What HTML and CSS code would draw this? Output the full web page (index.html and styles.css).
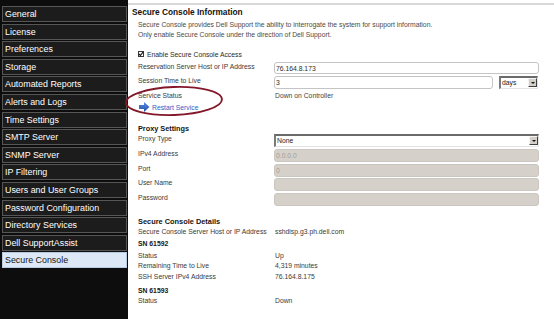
FILE: index.html
```html
<!DOCTYPE html>
<html>
    <head>
        <meta charset="utf-8" />
        <title>Secure Console</title>
        <link rel="stylesheet" href="styles.css">
    </head>
    <body>
        <div class="page">
            <ul class="nav">
                <li>General</li>
                <li>License</li>
                <li>Preferences</li>
                <li>Storage</li>
                <li>Automated Reports</li>
                <li>Alerts and Logs</li>
                <li>Time Settings</li>
                <li>SMTP Server</li>
                <li>SNMP Server</li>
                <li>IP Filtering</li>
                <li>Users and User Groups</li>
                <li>Password Configuration</li>
                <li>Directory Services</li>
                <li>Dell SupportAssist</li>
                <li class="current">Secure Console</li>
            </ul>

            <div class="main">
                <h1>Secure Console Information</h1>
                <div class="section">
                    <p class="desc">Secure Console provides Dell Support the ability to interrogate the system for support information.<br>Only enable Secure Console under the direction of Dell Support.</p>

                    <div class="check">
                        <span class="box"><svg width="6" height="6" viewBox="0 0 6 6"><path d="M1 3 L2.4 4.5 L5 1.2" fill="none" stroke="#111" stroke-width="1.1"/></svg></span>
                        Enable Secure Console Access
                    </div>

                    <div class="form top">
                        <span class="label">Reservation Server Host or IP Address</span>
                        <input class="text" type="text" value="76.164.8.173">

                        <span class="label">Session Time to Live</span>
                        <div class="ttl">
                            <input class="text" type="text" value="3">
                            <div class="select days"><span>days</span><i class="btn"></i></div>
                        </div>

                        <span class="label status">Service Status</span>
                        <span class="value status">Down on Controller</span>
                    </div>

                    <a class="restart" href="#">
                        <svg width="11" height="10" viewBox="0 0 11 10">
                            <defs>
                                <linearGradient id="arw" x1="0" y1="0" x2="0" y2="1">
                                    <stop offset="0" stop-color="#5b8de0"/>
                                    <stop offset="1" stop-color="#1f4fb0"/>
                                </linearGradient>
                            </defs>
                            <path d="M0 3 H5 V0 L10.5 5 L5 10 V7 H0 Z" fill="url(#arw)"/>
                        </svg>
                        Restart Service
                    </a>

                    <h2>Proxy Settings</h2>
                    <div class="form proxy">
                        <span class="label">Proxy Type</span>
                        <div class="select"><span>None</span><i class="btn"></i></div>

                        <span class="label">IPv4 Address</span>
                        <input class="text" type="text" value="0.0.0.0" disabled>

                        <span class="label">Port</span>
                        <input class="text" type="text" value="0" disabled>

                        <span class="label">User Name</span>
                        <input class="text" type="text" value="" disabled>

                        <span class="label">Password</span>
                        <input class="text" type="password" value="" disabled>
                    </div>

                    <h2 class="details-title">Secure Console Details</h2>
                    <div class="details">
                        <span>Secure Console Server Host or IP Address</span>
                        <span>sshdisp.g3.ph.dell.com</span>
                    </div>

                    <h3>SN 61592</h3>
                    <div class="details sn">
                        <span>Status</span>
                        <span>Up</span>
                        <span>Remaining Time to Live</span>
                        <span>4,319 minutes</span>
                        <span>SSH Server IPv4 Address</span>
                        <span>76.164.8.175</span>
                    </div>

                    <h3 class="second">SN 61593</h3>
                    <div class="details">
                        <span>Status</span>
                        <span>Down</span>
                    </div>
                </div>
            </div>

            <svg class="mark" width="104" height="36" viewBox="0 0 104 36">
                <ellipse cx="51" cy="17" rx="48" ry="14" fill="none" stroke="#82182a" stroke-width="1.8" transform="rotate(-2 51 17)"/>
            </svg>
        </div>
    </body>
</html>
```

FILE: styles.css
```css
* {
    margin: 0;
    padding: 0;
    box-sizing: border-box;
}

body {
    font-family: "Liberation Sans", Arial, sans-serif;
    background-color: #fff;
}

.page {
    position: relative;
    display: flex;
    width: 554px;
    height: 319px;
    overflow: hidden;
}

/* left menu */
.nav {
    list-style: none;
    flex: none;
    width: 128px;
    background-color: #0d0d0d;
    padding: 6px 1px 0 2px;
}

.nav li {
    height: 16px;
    margin-bottom: 1.6px;
    padding-left: 2px;
    background-color: #1c1c1c;
    border: 1px solid #565656;
    color: #fff;
    font-size: 8.9px;
    line-height: 14px;
    white-space: nowrap;
}

.nav li.current {
    background-color: #dce8f6;
    border-color: #b8cbe2;
    color: #151515;
}

/* right side */
.main {
    flex: 1;
    margin-top: 3px;
    border-top: 2px solid #d8d8d8;
    padding: 1px 15px 0 4px;
    color: #3a3a3a;
    font-size: 6.8px;
}

h1 {
    font-size: 8.3px;
    line-height: 12px;
    color: #111;
}

.section {
    padding-left: 6px;
}

.desc {
    margin-top: 2px;
    line-height: 9.5px;
    color: #4a4a4a;
}

.check {
    display: flex;
    align-items: center;
    margin-top: 10px;
    height: 10px;
    color: #2a2a2a;
}

.check .box {
    display: inline-block;
    width: 6px;
    height: 6px;
    margin-right: 3px;
    border: 1px solid #3a3a3a;
    background-color: #fff;
    position: relative;
}

.check .box svg {
    display: block;
    margin: -1px 0 0 -1px;
}

.form {
    display: grid;
    grid-template-columns: 136px 1fr;
}

.form.top {
    margin-top: 3px;
    grid-template-rows: 12px 13px 10px;
    row-gap: 2px;
}

.form.proxy {
    margin-top: 0.5px;
    grid-auto-rows: 13px;
    row-gap: 1.75px;
}

.label {
    line-height: 9px;
    align-self: start;
}

.status {
    line-height: 10px;
}

.value {
    color: #444;
    padding-left: 1px;
}

.text {
    display: block;
    width: 100%;
    height: 100%;
    padding: 0 1px;
    border: 1px solid #c4c4c4;
    border-radius: 3px;
    background-color: #fff;
    font-family: "Liberation Sans", Arial, sans-serif;
    font-size: 6.8px;
    color: #2a2a2a;
    outline: none;
}

.text:disabled {
    background-color: #d5d1ca;
    border-color: #cbc7c0;
    color: #a19d95;
}

.ttl {
    display: flex;
}

.ttl .text {
    width: 219px;
}

/* classic sunken dropdown */
.select {
    position: relative;
    height: 13px;
    border-style: solid;
    border-width: 2px 1px 1px 2px;
    border-color: #6a6a6a #e4e4e4 #e4e4e4 #7a7a7a;
    background-color: #fff;
    line-height: 9px;
    padding-left: 1px;
    color: #222;
}

.select.days {
    width: 39px;
    margin-left: 6px;
}

.select .btn {
    position: absolute;
    right: 0;
    top: 0;
    width: 9px;
    height: 9px;
    background-color: #d4d0c8;
    border-style: solid;
    border-width: 1px;
    border-color: #f4f4f4 #404040 #404040 #f4f4f4;
}

.select .btn::after {
    content: "";
    position: absolute;
    left: 2px;
    top: 3px;
    border-left: 2px solid transparent;
    border-right: 2px solid transparent;
    border-top: 2px solid #111;
}

.restart {
    display: flex;
    align-items: center;
    height: 10px;
    margin-top: 1px;
    padding-left: 1px;
    color: #2f5ec6;
    text-decoration: none;
}

.restart svg {
    margin-right: 2px;
}

h2 {
    font-size: 7.3px;
    line-height: 11px;
    color: #151515;
    margin-top: 10.5px;
}

h2.details-title {
    font-size: 7.4px;
    margin-top: 9.5px;
}

h3 {
    font-size: 6.8px;
    line-height: 11px;
    color: #151515;
    margin-top: 1px;
}

h3.second {
    margin-top: 2.5px;
}

.details {
    display: grid;
    grid-template-columns: 137px 1fr;
    line-height: 10.5px;
    color: #3a3a3a;
}

.details.sn {
    margin-top: 1.5px;
}

.mark {
    position: absolute;
    left: 123px;
    top: 84px;
}
```
